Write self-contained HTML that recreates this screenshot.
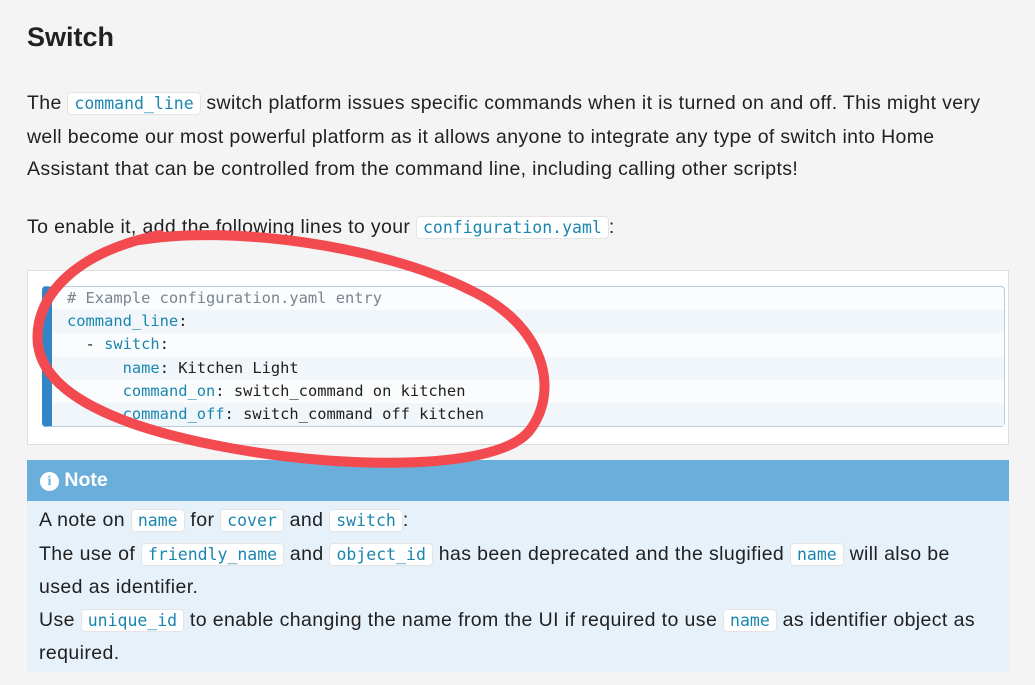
<!DOCTYPE html>
<html><head><meta charset="utf-8"><style>
body{margin:0;background:#f4f4f4;width:1035px;height:685px;overflow:hidden;font-family:"Liberation Sans",sans-serif;color:#212121;position:relative}
h2{position:absolute;left:27px;top:22px;margin:0;font-size:27px;font-weight:bold;color:#212121}
p{position:absolute;left:27px;margin:0;font-size:19.5px;letter-spacing:0.35px;line-height:32.5px;width:990px}
code{font-family:"DejaVu Sans Mono",monospace;font-size:16.5px;letter-spacing:0;color:#1a86b0;background:#fff;border:1px solid #e4e4e4;border-radius:4px;padding:1px 6px}
.box{position:absolute;left:27px;top:270px;width:980px;height:173px;background:#fff;border:1px solid #ddd}
.code{position:absolute;left:14px;top:15px;width:952px;height:139px;border:1px solid #bcd;border-left:10px solid #3385c6;border-radius:4px;background:#fafcfd;font-family:"DejaVu Sans Mono",monospace;font-size:15.4px}
.code div{height:23.2px;line-height:23px;padding-left:15px;white-space:pre}
.code div:nth-child(even){background:#f1f6fa}
.k{color:#1a86b0}.c{color:#7a8590}
.note{position:absolute;left:27px;top:460px;width:982px;height:212px;background:#e7f1fa}
.nh{height:41px;background:#6aafdc;color:#fff;font-weight:bold;font-size:19.5px;line-height:40px;padding-left:13px}
.nb{padding:3px 12px;font-size:19.5px;letter-spacing:0.4px;line-height:32.5px}
</style></head><body>
<h2>Switch</h2>
<p style="top:87px">The <code>command_line</code> switch platform issues specific commands when it is turned on and off. This might very well become our most powerful platform as it allows anyone to integrate any type of switch into Home Assistant that can be controlled from the command line, including calling other scripts!</p>
<p style="top:211px">To enable it, add the following lines to your <code>configuration.yaml</code>:</p>
<div class="box"><div class="code">
<div class="c"># Example configuration.yaml entry</div>
<div><span class="k">command_line</span>:</div>
<div>  - <span class="k">switch</span>:</div>
<div>      <span class="k">name</span>: Kitchen Light</div>
<div>      <span class="k">command_on</span>: switch_command on kitchen</div>
<div>      <span class="k">command_off</span>: switch_command off kitchen</div>
</div></div>
<div class="note"><div class="nh"><span style="display:inline-block;width:19px;height:19px;border-radius:50%;background:#fff;color:#6aafdc;font-size:14px;line-height:19px;text-align:center;font-family:'Liberation Serif',serif;vertical-align:1px">i</span> Note</div>
<div class="nb">A note on <code>name</code> for <code>cover</code> and <code>switch</code>:<br>The use of <code>friendly_name</code> and <code>object_id</code> has been deprecated and the slugified <code>name</code> will also be<br>used as identifier.<br>Use <code>unique_id</code> to enable changing the name from the UI if required to use <code>name</code> as identifier object as required.</div></div>
<svg style="position:absolute;left:0;top:0" width="1035" height="685"><path d="M140 240 C230 225 380 245 470 290 C545 325 560 390 530 430 C500 470 350 470 230 448 C120 428 45 395 38 345 C32 295 80 250 160 235" fill="none" stroke="#f24a4f" stroke-width="10" stroke-linecap="round"/></svg>
</body></html>
